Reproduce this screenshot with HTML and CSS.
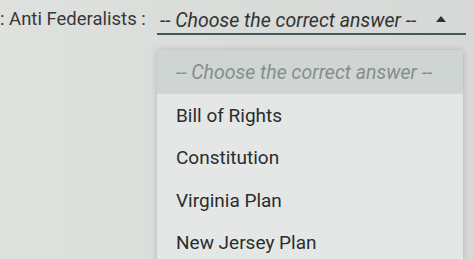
FILE: index.html
```html
<!DOCTYPE html>
<html>
<head>
<meta charset="utf-8">
<link rel="stylesheet" href="styles.css">
</head>
<body>
<div class="page">
  <div class="row">
    <span class="label">: Anti Federalists :</span>
    <div class="select">
      <span class="value">-- Choose the correct answer --</span>
      <span class="caret"></span>
    </div>
  </div>
  <div class="menu-wrap">
    <ul class="menu">
      <li class="opt placeholder">-- Choose the correct answer --</li>
      <li class="opt">Bill of Rights</li>
      <li class="opt">Constitution</li>
      <li class="opt">Virginia Plan</li>
      <li class="opt">New Jersey Plan</li>
    </ul>
  </div>
</div>
</body>
</html>
```
FILE: styles.css
```css
html, body {
  margin: 0;
  padding: 0;
  height: 100%;
  overflow: hidden;
}
body {
  background: linear-gradient(90deg, #dfe1de 0%, #d9dcd9 50%, #d6d9d7 100%);
  font-family: Roboto, "Liberation Sans", sans-serif;
  color: #3a3c3c;
}
.page {
  display: flex;
  flex-direction: column;
}
.row {
  display: flex;
  align-items: flex-start;
  height: 50px;
}
.label {
  font-size: 18.5px;
  margin-left: 0;
  padding-top: 8px;
  width: 157px;
  color: #353838;
}
.select {
  width: 309px;
  height: 26px;
  padding-top: 7px;
  display: flex;
  align-items: center;
  border-bottom: 2px solid #3f5a5c;
}
.value {
  font-style: italic;
  font-size: 19.5px;
  color: #303333;
  margin-left: 3px;
}
.caret {
  width: 0;
  height: 0;
  border-left: 5.5px solid transparent;
  border-right: 5.5px solid transparent;
  border-bottom: 6px solid #303333;
  margin-left: 20px;
  margin-top: -3px;
}
.menu-wrap {
  padding-left: 157px;
}
.menu {
  list-style: none;
  margin: 0;
  padding: 0;
  width: 306px;
  background: #e4e7e5;
  box-shadow: 0 0 6px rgba(0, 0, 0, 0.18);
}
.opt {
  height: 42.5px;
  display: flex;
  align-items: center;
  padding-left: 19px;
  font-size: 19px;
  color: #2a2d2d;
}
.opt.placeholder {
  height: 44px;
  background: #cfd5d3;
  color: #878d8c;
  font-style: italic;
  font-size: 19.5px;
}
```
